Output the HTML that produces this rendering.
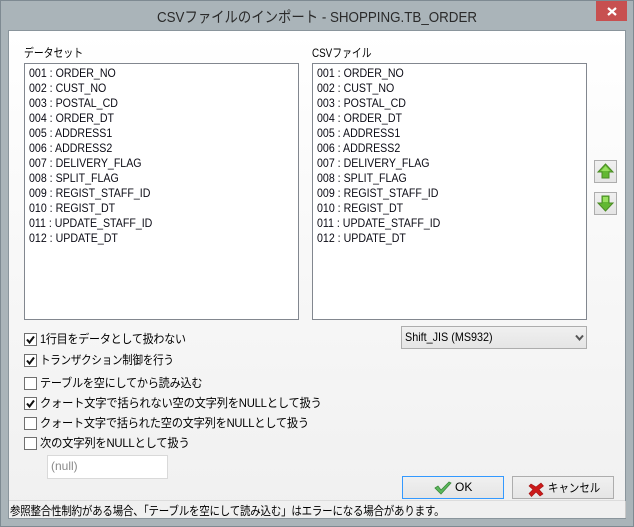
<!DOCTYPE html>
<html lang="ja">
<head>
<meta charset="utf-8">
<style>
html,body{margin:0;padding:0;}
body{width:634px;height:527px;position:relative;overflow:hidden;background:#aab4b9;font-family:"Liberation Sans","Noto Sans CJK JP",sans-serif;font-size:12px;color:#000;}
.a{position:absolute;white-space:nowrap;}
#frame{left:0;top:0;width:632px;height:525px;border:1px solid #7e8a92;}
#title{left:0;top:8px;width:634px;text-align:center;font-size:15px;line-height:20px;color:#2a2a2a;transform:scaleX(.891);transform-origin:50% 50%;}
#close{left:596px;top:1px;width:31px;height:20px;background:#c75050;}
#client{left:8px;top:30px;width:616px;height:487px;border:1px solid #8a959c;background:linear-gradient(to bottom,#ffffff 0,#f0f0f0 100%);}
.list{width:273px;height:255px;border:1px solid #82878f;background:#fff;top:63px;}
.list div{position:absolute;left:4px;font-size:12px;line-height:15px;height:15px;transform:scaleX(.885);transform-origin:0 50%;color:#0a0a14;}
.lbl{font-size:12px;line-height:16px;transform:scaleX(.82);transform-origin:0 50%;}
.cb{left:24px;width:11px;height:11px;border:1px solid #6f6f6f;background:#fff;}
.cb svg{position:absolute;left:0;top:0;}
.cl{left:40px;font-size:12px;line-height:16px;letter-spacing:-0.25px;transform-origin:0 50%;}
.btn{border:1px solid #adadad;background:linear-gradient(to bottom,#f0f0f0,#e5e5e5);}
</style>
</head>
<body>
<div class="a" id="frame"></div>
<div class="a" id="title">CSVファイルのインポート - SHOPPING.TB_ORDER</div>
<div class="a" id="close">
<svg width="31" height="20"><path d="M12 7 L20 14 M20 7 L12 14" stroke="#fff" stroke-width="2.200" fill="none"/></svg>
</div>
<div class="a" id="client"></div>

<div class="a lbl" style="left:24px;top:45px;">データセット</div>
<div class="a lbl" style="left:312px;top:45px;">CSVファイル</div>

<div class="a list" style="left:24px;">
<div style="top:2px">001 : ORDER_NO</div>
<div style="top:17px">002 : CUST_NO</div>
<div style="top:32px">003 : POSTAL_CD</div>
<div style="top:47px">004 : ORDER_DT</div>
<div style="top:62px">005 : ADDRESS1</div>
<div style="top:77px">006 : ADDRESS2</div>
<div style="top:92px">007 : DELIVERY_FLAG</div>
<div style="top:107px">008 : SPLIT_FLAG</div>
<div style="top:122px">009 : REGIST_STAFF_ID</div>
<div style="top:137px">010 : REGIST_DT</div>
<div style="top:152px">011 : UPDATE_STAFF_ID</div>
<div style="top:167px">012 : UPDATE_DT</div>
</div>

<div class="a list" style="left:312px;">
<div style="top:2px">001 : ORDER_NO</div>
<div style="top:17px">002 : CUST_NO</div>
<div style="top:32px">003 : POSTAL_CD</div>
<div style="top:47px">004 : ORDER_DT</div>
<div style="top:62px">005 : ADDRESS1</div>
<div style="top:77px">006 : ADDRESS2</div>
<div style="top:92px">007 : DELIVERY_FLAG</div>
<div style="top:107px">008 : SPLIT_FLAG</div>
<div style="top:122px">009 : REGIST_STAFF_ID</div>
<div style="top:137px">010 : REGIST_DT</div>
<div style="top:152px">011 : UPDATE_STAFF_ID</div>
<div style="top:167px">012 : UPDATE_DT</div>
</div>

<div class="a btn" style="left:594px;top:160px;width:21px;height:21px;">
<svg width="21" height="21"><path d="M10.500 3 L18 11 L14 11 L14 17 L7 17 L7 11 L3 11 Z" fill="#62b832" stroke="#4a8a24" stroke-width="1"/><path d="M10.500 5 L15 10 L6 10 Z" fill="#98e060"/></svg>
</div>
<div class="a btn" style="left:594px;top:192px;width:21px;height:21px;">
<svg width="21" height="21"><path d="M7 3 L14 3 L14 10 L18 10 L10.500 18 L3 10 L7 10 Z" fill="#62b832" stroke="#4a8a24" stroke-width="1"/><path d="M8 4 L13 4 L13 9 L8 9 Z" fill="#98e060"/></svg>
</div>

<div class="a cb" style="top:333px;"><svg width="11" height="11"><path d="M2 5.500 L4.500 8.500 L9 2.500" stroke="#111" stroke-width="2" fill="none"/></svg></div>
<div class="a cl" style="top:331px;transform:scaleX(.918);">1行目をデータとして扱わない</div>
<div class="a cb" style="top:354px;"><svg width="11" height="11"><path d="M2 5.500 L4.500 8.500 L9 2.500" stroke="#111" stroke-width="2" fill="none"/></svg></div>
<div class="a cl" style="top:352px;transform:scaleX(.875);">トランザクション制御を行う</div>
<div class="a cb" style="top:377px;"></div>
<div class="a cl" style="top:375px;transform:scaleX(.926);">テーブルを空にしてから読み込む</div>
<div class="a cb" style="top:397px;"><svg width="11" height="11"><path d="M2 5.500 L4.500 8.500 L9 2.500" stroke="#111" stroke-width="2" fill="none"/></svg></div>
<div class="a cl" style="top:395px;transform:scaleX(.94);">クォート文字で括られない空の文字列をNULLとして扱う</div>
<div class="a cb" style="top:417px;"></div>
<div class="a cl" style="top:415px;transform:scaleX(.934);">クォート文字で括られた空の文字列をNULLとして扱う</div>
<div class="a cb" style="top:437px;"></div>
<div class="a cl" style="top:435px;transform:scaleX(.943);">次の文字列をNULLとして扱う</div>

<div class="a" style="left:47px;top:455px;width:119px;height:22px;border:1px solid #d9d9d9;background:#fff;color:#8a8a8a;line-height:20px;text-indent:3px;">(null)</div>

<div class="a btn" style="left:401px;top:326px;width:184px;height:21px;line-height:21px;"><span style="display:inline-block;margin-left:3px;transform:scaleX(.9);transform-origin:0 50%;">Shift_JIS (MS932)</span>
<svg class="a" style="left:173px;top:7px;" width="9" height="8"><path d="M1 1.500 L4.500 5.500 L8 1.500" stroke="#555" stroke-width="2" fill="none"/></svg>
</div>

<div class="a btn" style="left:402px;top:476px;width:100px;height:21px;border-color:#3399ff;text-align:center;line-height:21px;">
<svg class="a" style="left:31px;top:4px;" width="18" height="14"><path d="M1 7 L4 5 L7 9 L15 1 L17 2 L7 13 Z" fill="#5cb85c" stroke="#3c8a3c" stroke-width="0.800"/></svg>
<span class="a" style="left:52px;top:0;font-size:12px;">OK</span>
</div>
<div class="a btn" style="left:512px;top:476px;width:100px;height:21px;line-height:21px;">
<svg class="a" style="left:15px;top:5px;" width="16" height="15"><path d="M3 2 L8 5 L13 1 L15.500 4 L11 7.500 L15 12 L12 14 L8 10 L3.500 14.500 L1 11.500 L5 7.500 L1 4 Z" fill="#cc1a1a" stroke="#a01010" stroke-width="0.600"/></svg>
<span class="a" style="left:35px;top:1px;font-size:12px;transform:scaleX(.87);transform-origin:0 50%;">キャンセル</span>
</div>

<div class="a" style="left:9px;top:500px;width:616px;height:1px;background:#dcdcdc;"></div>
<div class="a" style="left:9px;top:501px;width:616px;height:17px;background:#f0f0f0;"></div>
<div class="a" style="left:625px;top:501px;width:1px;height:17px;background:#c8c8c8;"></div>
<div class="a" style="left:10px;top:503px;font-size:12px;line-height:16px;letter-spacing:-0.25px;transform:scaleX(.874);transform-origin:0 50%;">参照整合性制約がある場合、「テーブルを空にして読み込む」はエラーになる場合があります。</div>
</body>
</html>
